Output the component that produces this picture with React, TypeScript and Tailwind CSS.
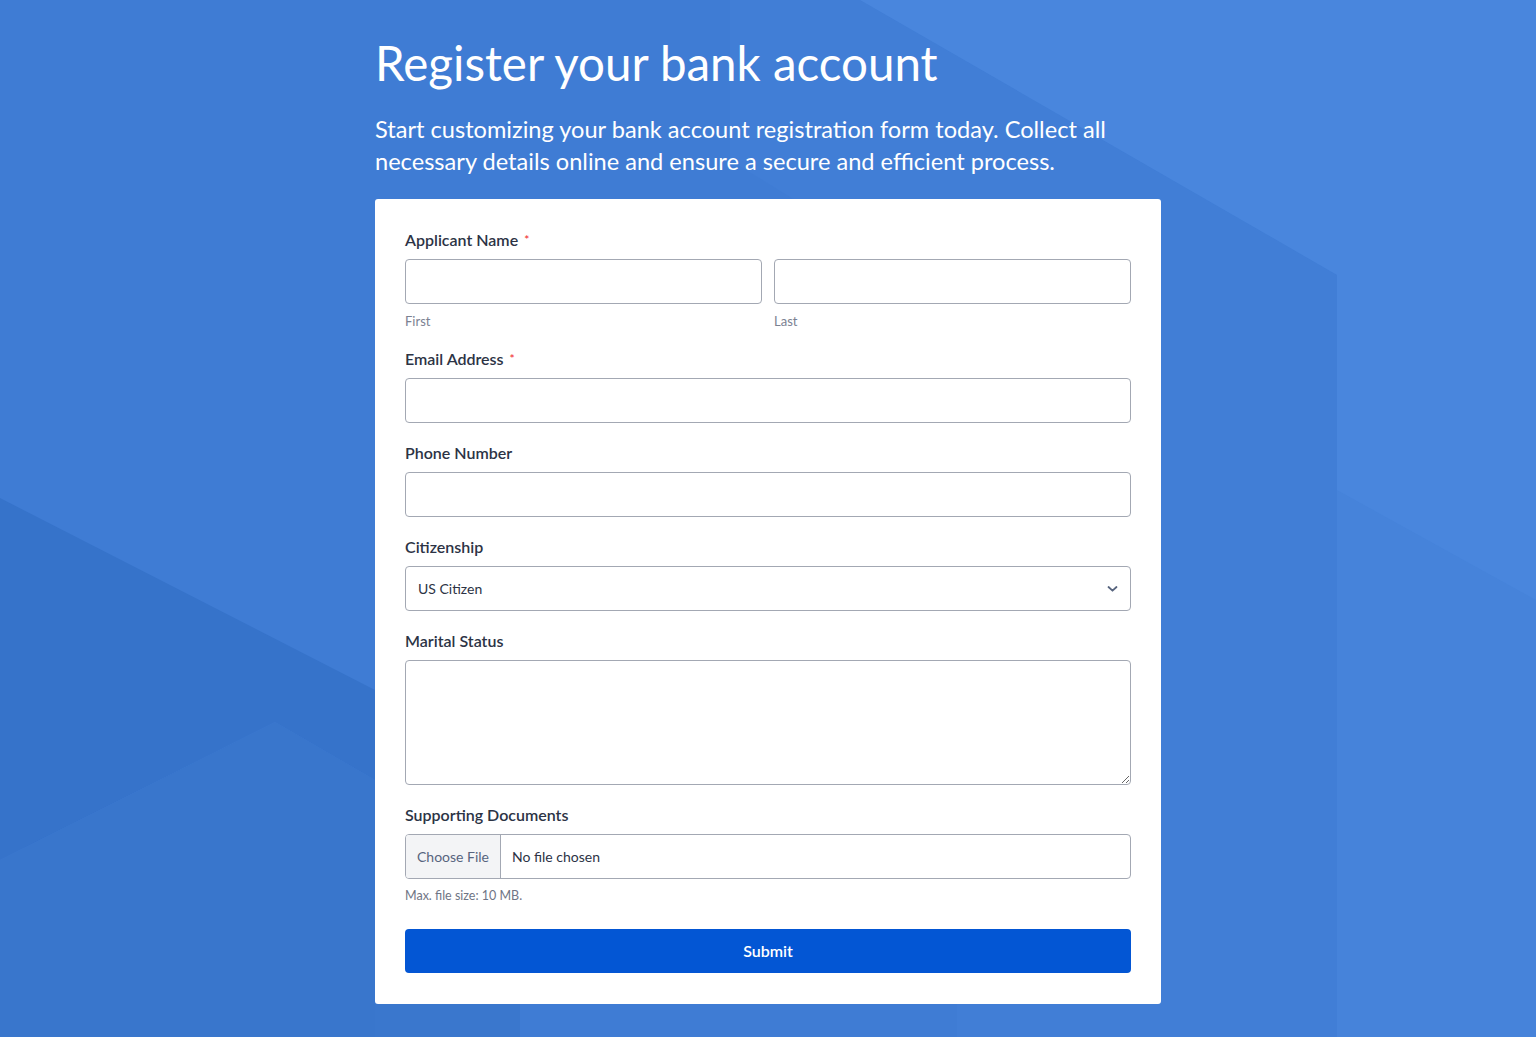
import React from 'react';

function Background() {
  return (
    <svg
      className="absolute inset-0 h-full w-full"
      viewBox="0 0 1536 1037"
      preserveAspectRatio="none"
      aria-hidden="true"
    >
      <rect width="1536" height="1037" fill="#3f7cd4" />
      <polygon points="730,0 860,0 1337,275 1337,1037 957,1037 957,300 730,160" fill="#417ed6" />
      <polygon points="860,0 1536,0 1536,1037 1337,1037 1337,275" fill="#4986dd" />
      <polygon points="1337,490 1536,600 1536,1037 1337,1037" fill="#4683da" />
      <polygon points="0,498 375,690 375,780 275,722 0,860" fill="#3673ca" />
      <polygon points="0,860 275,722 375,780 375,1037 0,1037" fill="#3976cc" />
      <polygon points="375,1004 520,1004 520,1037 375,1037" fill="#3a77cd" />
    </svg>
  );
}

function Label({ children, required }: { children: React.ReactNode; required?: boolean }) {
  return (
    <label className="mb-[9px] flex h-5 items-center text-[16px] font-semibold leading-5 text-[#2c3345]">
      {children}
      {required && <span className="ml-[6px] text-[12px] text-[#f23a3c]">*</span>}
    </label>
  );
}

const inputCls =
  'h-[45px] w-full rounded-[4px] border border-[#a3a8b3] bg-white px-3 text-[14px] text-[#2c3345] outline-none';

export default function App() {
  return (
    <div className="relative min-h-screen w-full overflow-hidden font-[Lato,sans-serif]">
      <Background />

      <div className="relative mx-auto flex w-[786px] flex-col pt-[34px] pb-[33px]">
        <h1 className="text-[47.5px] font-normal leading-[58px] text-white">Register your bank account</h1>
        <p className="mt-[21px] text-[23.6px] leading-[32px] text-white">
          Start customizing your bank account registration form today. Collect all necessary details online and
          ensure a secure and efficient process.
        </p>

        <form className="mt-[22px] flex flex-col rounded-[3px] bg-white px-[30px] pt-[31px] pb-[31px]">
          {/* Applicant name */}
          <div className="flex flex-col">
            <Label required>Applicant Name</Label>
            <div className="grid grid-cols-2 gap-3">
              <div className="flex flex-col">
                <input className={inputCls} type="text" />
                <span className="mt-[9px] text-[13px] leading-4 text-[#7b8192]">First</span>
              </div>
              <div className="flex flex-col">
                <input className={inputCls} type="text" />
                <span className="mt-[9px] text-[13px] leading-4 text-[#7b8192]">Last</span>
              </div>
            </div>
          </div>

          <div className="mt-5 flex flex-col">
            <Label required>Email Address</Label>
            <input className={inputCls} type="email" />
          </div>

          <div className="mt-5 flex flex-col">
            <Label>Phone Number</Label>
            <input className={inputCls} type="tel" />
          </div>

          <div className="mt-5 flex flex-col">
            <Label>Citizenship</Label>
            <div className="relative">
              <select className={inputCls + ' appearance-none'} defaultValue="US Citizen">
                <option>US Citizen</option>
                <option>Permanent Resident</option>
                <option>Non-Resident</option>
              </select>
              <svg
                className="pointer-events-none absolute top-1/2 right-[13px] h-[7px] w-[11px] -translate-y-1/2"
                viewBox="0 0 11 7"
                fill="none"
              >
                <path d="M1.5 1.5 5.5 5.2 9.5 1.5" stroke="#57647e" strokeWidth="1.8" strokeLinecap="round" strokeLinejoin="round" />
              </svg>
            </div>
          </div>

          <div className="mt-5 flex flex-col">
            <Label>Marital Status</Label>
            <textarea className="h-[125px] w-full rounded-[4px] border border-[#a3a8b3] bg-white px-3 py-2 text-[14px] text-[#2c3345] outline-none" />
          </div>

          <div className="mt-5 flex flex-col">
            <Label>Supporting Documents</Label>
            <div className="flex h-[45px] w-full overflow-hidden rounded-[4px] border border-[#a3a8b3] bg-white">
              <button
                type="button"
                className="flex h-full w-[95px] items-center justify-center border-r border-[#a3a8b3] bg-[#f3f4f6] text-[14px] text-[#57647e]"
              >
                Choose File
              </button>
              <span className="flex items-center pl-[11px] text-[14px] text-[#2c3345]">No file chosen</span>
            </div>
            <span className="mt-2 text-[12.5px] leading-[18px] text-[#6f7585]">Max. file size: 10 MB.</span>
          </div>

          <button
            type="submit"
            className="mt-6 flex h-[44px] w-full items-center justify-center rounded-[4px] bg-[#0356d4] text-[16px] font-semibold text-white"
          >
            Submit
          </button>
        </form>
      </div>
    </div>
  );
}
